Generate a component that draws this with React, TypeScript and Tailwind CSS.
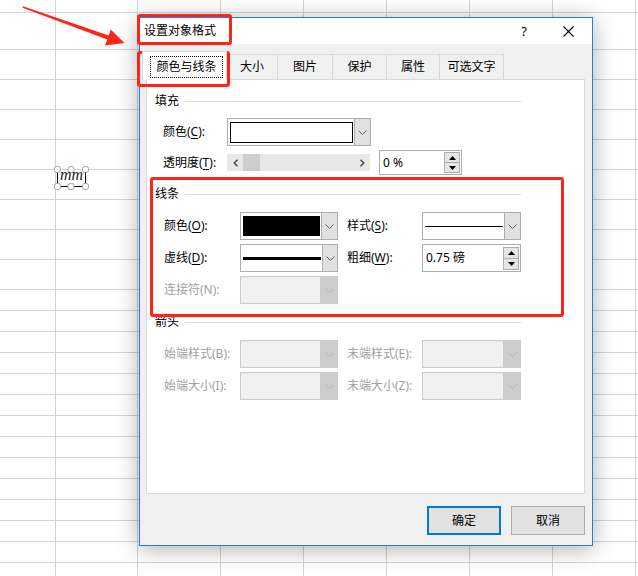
import React from "react";

const rowH: string[] = [
  "h-[13px]",
  "h-[37px]",
  "h-[30px]", "h-[30px]", "h-[30px]", "h-[30px]", "h-[30px]", "h-[30px]", "h-[30px]", "h-[30px]",
  "h-[21px]", "h-[21px]", "h-[21px]", "h-[21px]", "h-[21px]", "h-[21px]", "h-[21px]",
  "h-[21px]", "h-[21px]", "h-[21px]", "h-[21px]", "h-[21px]", "h-[21px]",
  "h-[14px]",
];
const colW: string[] = [
  "w-[56px]", "w-[82px]", "w-[83px]", "w-[83px]", "w-[83px]", "w-[83px]", "w-[83px]", "w-[83px]", "w-[10px]",
];

function Sheet() {
  return (
    <div className="flex flex-col">
      {rowH.map((h, i) => (
        <div key={i} className={`flex ${h}`}>
          {colW.map((w, j) => (
            <div key={j} className={`box-border shrink-0 h-full border-r border-b border-[#d4d4d4] ${w}`} />
          ))}
        </div>
      ))}
    </div>
  );
}

function Chevron({ disabled }: { disabled?: boolean }) {
  return (
    <svg width="9" height="5" viewBox="0 0 9 5">
      <path d="M0.5 0.5 L4.5 4.5 L8.5 0.5" fill="none" stroke={disabled ? "#b4b4b4" : "#5f5f5f"} strokeWidth="1" />
    </svg>
  );
}

function Combo({ w, disabled, children }: { w: string; disabled?: boolean; children?: React.ReactNode }) {
  return (
    <div
      className={`box-border flex h-[28px] border ${w} ${
        disabled ? "border-[#cccccc] bg-[#f0f0f0]" : "border-[#adadad] bg-white"
      }`}
    >
      <div className="flex-1 flex items-center pl-[2px] pr-[1px]">{children}</div>
      <div
        className={`box-border w-[17px] h-full flex items-center justify-center border-l ${
          disabled ? "bg-[#cccccc] border-[#cccccc]" : "bg-[#e1e1e1] border-[#adadad]"
        }`}
      >
        <Chevron disabled={disabled} />
      </div>
    </div>
  );
}

function Spinner({ h }: { h: string }) {
  return (
    <div className={`box-border flex flex-col w-[16px] ${h} border border-[#adadad] bg-[#e5e5e5]`}>
      <div className="flex-1 flex items-center justify-center border-b border-[#adadad]">
        <svg width="7" height="4" viewBox="0 0 7 4">
          <path d="M3.5 0 L7 4 L0 4 Z" fill="#000" />
        </svg>
      </div>
      <div className="flex-1 flex items-center justify-center">
        <svg width="7" height="4" viewBox="0 0 7 4">
          <path d="M0 0 L7 0 L3.5 4 Z" fill="#000" />
        </svg>
      </div>
    </div>
  );
}

function Header({ title }: { title: string }) {
  return (
    <div className="flex items-center h-[16px] pl-[8px] mr-[63px]">
      <span className="text-[12px] leading-none text-black">{title}</span>
      <div className="flex-1 h-px bg-[#dcdcdc] ml-[6px]" />
    </div>
  );
}

function Key({ k }: { k: string }) {
  return <span className="underline underline-offset-[2px] decoration-1">{k}</span>;
}

function Label({ w, disabled, children }: { w: string; disabled?: boolean; children: React.ReactNode }) {
  return (
    <div className={`${w} shrink-0 text-[12px] leading-none ${disabled ? "text-[#a0a0a0]" : "text-black"}`}>
      {children}
    </div>
  );
}

function Tab({ w, label }: { w: string; label: string }) {
  return (
    <div
      className={`box-border h-[25px] ${w} border-t border-r border-[#d9d9d9] bg-[#f0f0f0] flex items-center justify-center text-[12px] leading-none text-black`}
    >
      {label}
    </div>
  );
}

function Dialog() {
  return (
    <div className="absolute left-[139px] top-[17px] w-[454px] h-[529px] box-border border border-[#1883d7] bg-[#f0f0f0] shadow-[0_3px_22px_rgba(0,0,0,0.32)] flex flex-col">
      {/* title bar */}
      <div className="h-[26px] bg-white flex items-center shrink-0">
        <span className="pl-[4px] text-[12px] leading-none text-black">设置对象格式</span>
        <div className="flex-1" />
        <span className="text-[13px] leading-none text-black mr-[36px]">?</span>
        <svg width="11" height="11" viewBox="0 0 11 11" className="mr-[18px]">
          <path d="M0.5 0.5 L10.5 10.5 M10.5 0.5 L0.5 10.5" stroke="#000" strokeWidth="1.1" fill="none" />
        </svg>
      </div>
      {/* body */}
      <div className="flex-1 flex flex-col pt-[7px]">
        {/* tabs */}
        <div className="flex items-end h-[28px] pl-[2px] shrink-0">
          <div className="relative z-10 box-border w-[85px] h-[29px] -mb-px bg-white border-t border-l border-r border-[#d9d9d9] pt-[4px] pl-[7px]">
            <div className="box-border w-[73px] h-[22px] border border-dotted border-black flex items-center justify-center text-[12px] leading-none text-black">
              颜色与线条
            </div>
          </div>
          <Tab w="w-[51px]" label="大小" />
          <Tab w="w-[55px]" label="图片" />
          <Tab w="w-[54px]" label="保护" />
          <Tab w="w-[53px]" label="属性" />
          <Tab w="w-[64px]" label="可选文字" />
        </div>
        {/* panel */}
        <div className="box-border ml-[6px] w-[439px] h-[415px] border border-[#d9d9d9] bg-white flex flex-col shrink-0">
          <div className="mt-[13px]">
            <Header title="填充" />
          </div>
          <div className="mt-[9px] flex items-center h-[28px] pl-[16px]">
            <Label w="w-[64px]">
              颜色(<Key k="C" />):
            </Label>
            <Combo w="w-[144px]">
              <div className="box-border w-[123px] h-[21px] border border-black bg-white" />
            </Combo>
          </div>
          <div className="mt-[4px] flex items-center h-[25px] pl-[16px]">
            <Label w="w-[64px]">
              透明度(<Key k="T" />):
            </Label>
            <div className="w-[143px] h-[17px] bg-[#e8e8e8] flex items-center">
              <svg width="6" height="8" viewBox="0 0 6 8" className="ml-[6px]">
                <path d="M4.5 0.8 L1.3 4 L4.5 7.2" fill="none" stroke="#505050" strokeWidth="1.6" />
              </svg>
              <div className="ml-[4px] w-[17px] h-full bg-[#cdcdcd]" />
              <div className="flex-1" />
              <svg width="6" height="8" viewBox="0 0 6 8" className="mr-[5px]">
                <path d="M1.5 0.8 L4.7 4 L1.5 7.2" fill="none" stroke="#505050" strokeWidth="1.6" />
              </svg>
            </div>
            <div className="ml-[9px] box-border w-[83px] h-[25px] border border-[#adadad] bg-white flex items-center pl-[3px] pr-[1px]">
              <span className="flex-1 text-[12px] leading-none text-black">0 %</span>
              <Spinner h="h-[21px]" />
            </div>
          </div>

          <div className="mt-[11px]">
            <Header title="线条" />
          </div>
          <div className="mt-[10px] flex items-center h-[28px] pl-[17px]">
            <Label w="w-[76px]">
              颜色(<Key k="O" />):
            </Label>
            <Combo w="w-[98px]">
              <div className="w-[77px] h-[20px] bg-black" />
            </Combo>
            <div className="w-[9px]" />
            <Label w="w-[75px]">
              样式(<Key k="S" />):
            </Label>
            <Combo w="w-[99px]">
              <div className="w-[78px] h-px bg-black" />
            </Combo>
          </div>
          <div className="mt-[4px] flex items-center h-[28px] pl-[17px]">
            <Label w="w-[76px]">
              虚线(<Key k="D" />):
            </Label>
            <Combo w="w-[98px]">
              <div className="w-[78px] h-[3px] bg-black" />
            </Combo>
            <div className="w-[9px]" />
            <Label w="w-[75px]">
              粗细(<Key k="W" />):
            </Label>
            <div className="box-border w-[99px] h-[28px] border border-[#adadad] bg-white flex items-center pl-[3px] pr-[1px]">
              <span className="flex-1 text-[12px] leading-none text-black">0.75 磅</span>
              <Spinner h="h-[23px]" />
            </div>
          </div>
          <div className="mt-[4px] flex items-center h-[28px] pl-[17px]">
            <Label w="w-[76px]" disabled>
              连接符(N):
            </Label>
            <Combo w="w-[98px]" disabled />
          </div>

          <div className="mt-[10px]">
            <Header title="箭头" />
          </div>
          <div className="mt-[10px] flex items-center h-[28px] pl-[17px]">
            <Label w="w-[76px]" disabled>
              始端样式(B):
            </Label>
            <Combo w="w-[98px]" disabled />
            <div className="w-[9px]" />
            <Label w="w-[75px]" disabled>
              末端样式(E):
            </Label>
            <Combo w="w-[99px]" disabled />
          </div>
          <div className="mt-[4px] flex items-center h-[28px] pl-[17px]">
            <Label w="w-[76px]" disabled>
              始端大小(I):
            </Label>
            <Combo w="w-[98px]" disabled />
            <div className="w-[9px]" />
            <Label w="w-[75px]" disabled>
              末端大小(Z):
            </Label>
            <Combo w="w-[99px]" disabled />
          </div>
        </div>
        {/* buttons */}
        <div className="mt-[12px] flex justify-end gap-[10px] pr-[7px] shrink-0">
          <button className="box-border w-[74px] h-[29px] border-2 border-[#0078d7] bg-[#e1e1e1] text-[12px] leading-none text-black">
            确定
          </button>
          <button className="box-border w-[74px] h-[29px] border border-[#adadad] bg-[#e1e1e1] text-[12px] leading-none text-black">
            取消
          </button>
        </div>
      </div>
    </div>
  );
}

function TextObject() {
  return (
    <div className="absolute left-[54px] top-[166px] w-[36px] h-[26px]">
      <svg width="36" height="26" viewBox="0 0 36 26" className="absolute left-0 top-0">
        <path d="M3.5 6 L3.5 20.5 L31.5 20.5 L31.5 6" fill="none" stroke="#000" strokeWidth="1" />
        {[
          [3.5, 3.5],
          [17, 3.5],
          [31.5, 3.5],
          [3.5, 20.5],
          [17, 20.5],
          [31.5, 20.5],
        ].map(([x, y], i) => (
          <rect key={i} x={x - 3} y={y - 3} width="6" height="6" rx="2.2" fill="#fff" stroke="#a0a0a0" strokeWidth="1" />
        ))}
      </svg>
      <span className="absolute left-[6px] top-[1px] font-['Liberation_Serif',serif] italic text-[16px] leading-none text-[#222]">
        mm
      </span>
    </div>
  );
}

export default function App() {
  return (
    <div className="relative w-[638px] h-[576px] overflow-hidden bg-white font-['Noto_Sans','Noto_Sans_CJK_SC',sans-serif]">
      <Sheet />
      <TextObject />
      <Dialog />
      {/* red annotations */}
      <div className="absolute left-[137px] top-[14px] w-[95px] h-[31px] box-border border-[3px] border-[#ff2418] rounded-[3px]" />
      <div className="absolute left-[137px] top-[51px] w-[93px] h-[36px] box-border border-[3px] border-[#ff2418] rounded-[3px]" />
      <div className="absolute left-[150px] top-[177px] w-[414px] h-[140px] box-border border-[3px] border-[#ff2418] rounded-[3px]" />
      <svg width="638" height="576" className="absolute left-0 top-0 pointer-events-none">
        <polygon
          points="23,6.3 108.7,35.4 110.7,29.6 124.5,43 105,45.6 107.3,39.6 22.5,7.8"
          fill="#ff2418"
        />
      </svg>
    </div>
  );
}
